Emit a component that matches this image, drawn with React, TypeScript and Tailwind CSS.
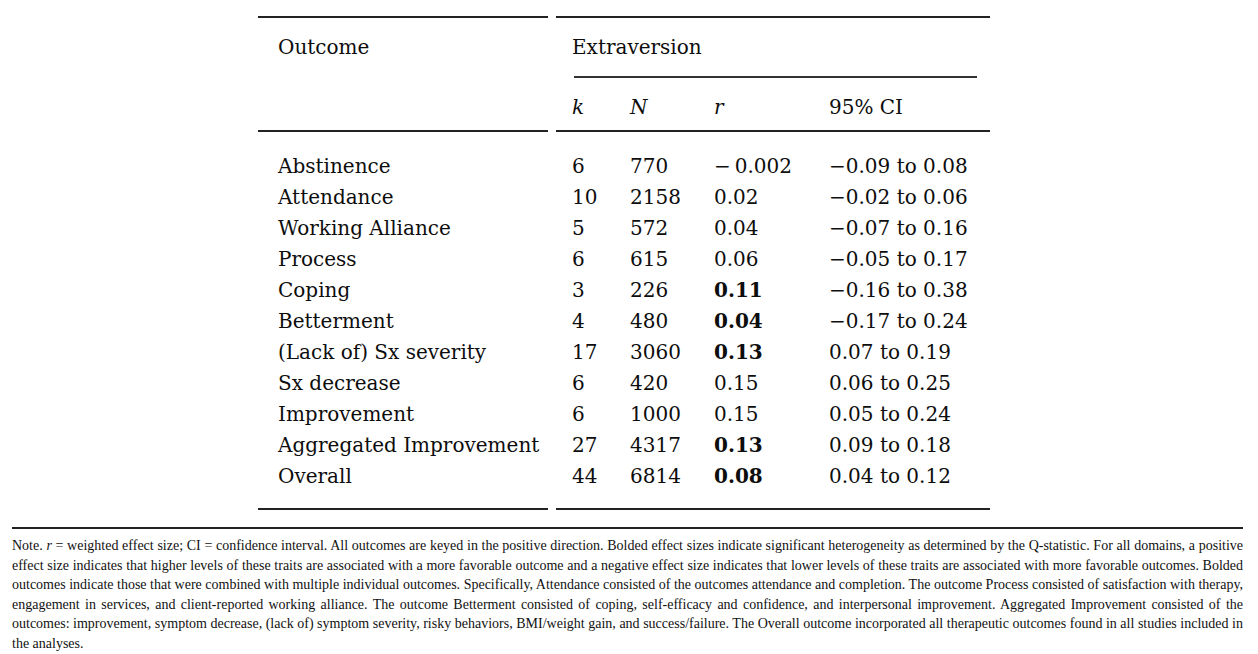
import React from "react";

type Row = {
  label: string;
  k: string;
  n: string;
  r: string;
  ci: string;
  bold?: boolean;
};

const rows: Row[] = [
  { label: "Abstinence", k: "6", n: "770", r: "\u2212\u20090.002", ci: "\u22120.09 to 0.08" },
  { label: "Attendance", k: "10", n: "2158", r: "0.02", ci: "\u22120.02 to 0.06" },
  { label: "Working Alliance", k: "5", n: "572", r: "0.04", ci: "\u22120.07 to 0.16" },
  { label: "Process", k: "6", n: "615", r: "0.06", ci: "\u22120.05 to 0.17" },
  { label: "Coping", k: "3", n: "226", r: "0.11", ci: "\u22120.16 to 0.38", bold: true },
  { label: "Betterment", k: "4", n: "480", r: "0.04", ci: "\u22120.17 to 0.24", bold: true },
  { label: "(Lack of) Sx severity", k: "17", n: "3060", r: "0.13", ci: "0.07 to 0.19", bold: true },
  { label: "Sx decrease", k: "6", n: "420", r: "0.15", ci: "0.06 to 0.25" },
  { label: "Improvement", k: "6", n: "1000", r: "0.15", ci: "0.05 to 0.24" },
  { label: "Aggregated Improvement", k: "27", n: "4317", r: "0.13", ci: "0.09 to 0.18", bold: true },
  { label: "Overall", k: "44", n: "6814", r: "0.08", ci: "0.04 to 0.12", bold: true },
];

const noteLines = [
  "effect size indicates that higher levels of these traits are associated with a more favorable outcome and a negative effect size indicates that lower levels of these traits are associated with more favorable outcomes. Bolded",
  "outcomes indicate those that were combined with multiple individual outcomes. Specifically, Attendance consisted of the outcomes attendance and completion. The outcome Process consisted of satisfaction with therapy,",
  "engagement in services, and client-reported working alliance. The outcome Betterment consisted of coping, self-efficacy and confidence, and interpersonal improvement. Aggregated Improvement consisted of the",
  "outcomes: improvement, symptom decrease, (lack of) symptom severity, risky behaviors, BMI/weight gain, and success/failure. The Overall outcome incorporated all therapeutic outcomes found in all studies included in",
];

function Rules() {
  return (
    <div className="flex gap-2">
      <div className="w-[290px] border-t-2 border-[#222]" />
      <div className="w-[434px] border-t-2 border-[#222]" />
    </div>
  );
}

export default function App() {
  return (
    <div className="w-[1258px] h-[654px] bg-white text-[#0d0d0d] overflow-hidden">
      <div className="pt-[16px] pl-[258px] font-['DejaVu_Serif',serif] text-[20px] leading-[31px]">
        <Rules />

        <div className="flex gap-2 pt-[14px]">
          <div className="w-[290px] pl-[20px]">Outcome</div>
          <div className="w-[434px]">
            <div className="pl-[16px]">Extraversion</div>
            <div className="ml-[18px] mt-[13px] w-[403px] border-t-2 border-[#333]" />
            <div className="flex pl-[16px] pt-[14px]">
              <span className="w-[58px] italic">k</span>
              <span className="w-[84px] italic">N</span>
              <span className="w-[115px] italic">r</span>
              <span>95% CI</span>
            </div>
          </div>
        </div>

        <div className="mt-[7px]">
          <Rules />
        </div>

        <div className="pt-[19px] pb-[16px]">
          {rows.map((row) => (
            <div key={row.label} className="flex h-[31px] items-center">
              <span className="w-[314px] pl-[20px]">{row.label}</span>
              <span className="w-[58px]">{row.k}</span>
              <span className="w-[84px]">{row.n}</span>
              <span className={`w-[115px] ${row.bold ? "font-bold" : ""}`}>{row.r}</span>
              <span>{row.ci}</span>
            </div>
          ))}
        </div>

        <Rules />
      </div>

      <div className="mx-[12px] mt-[17px] border-t-2 border-[#222] w-[1231px]" />

      <div className="px-[12px] pt-[7px] w-[1255px] font-['Liberation_Serif',serif] text-[14px] leading-[19.5px] text-[#111]">
        <div className="text-justify [text-align-last:justify]">
          Note. <span className="italic">r</span> = weighted effect size; CI = confidence interval. All outcomes are keyed in the
          positive direction. Bolded effect sizes indicate significant heterogeneity as determined by the Q-statistic. For all
          domains, a positive
        </div>
        {noteLines.map((line) => (
          <div key={line} className="text-justify [text-align-last:justify]">
            {line}
          </div>
        ))}
        <div>the analyses.</div>
      </div>
    </div>
  );
}
